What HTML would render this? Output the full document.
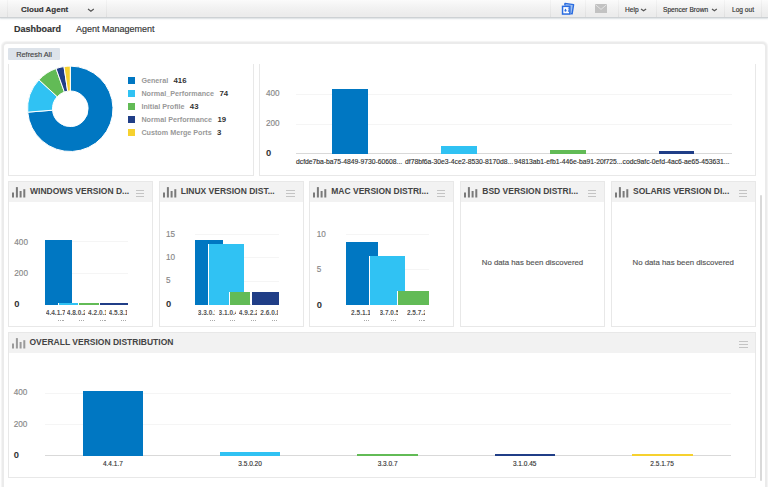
<!DOCTYPE html><html><head><meta charset="utf-8"><style>
*{box-sizing:border-box;margin:0;padding:0}
html,body{width:768px;height:487px;overflow:hidden;background:#fff;font-family:"Liberation Sans",sans-serif;position:relative}
.abs{position:absolute}
#topbar{left:0;top:0;width:768px;height:18px;background:linear-gradient(#fbfbfb 0,#f3f3f3 40%,#ececec 85%);border-bottom:1px solid #cdd1d4;box-shadow:0 0.6px 1.2px rgba(190,198,204,.55)}
.sep{position:absolute;top:0;width:1px;height:17px;background:linear-gradient(#f4f4f4,#dedede)}
.tb{position:absolute;font-size:6.6px;color:#333;top:7px;white-space:nowrap;line-height:1}
.chev{position:absolute;width:4px;height:4px;border-right:1.2px solid #555;border-bottom:1.2px solid #555;transform:rotate(45deg)}
.t{position:absolute;top:24.5px;font-size:9px;color:#333;white-space:nowrap;line-height:1}
#panel{left:2px;top:42.3px;width:765px;height:460px;border:2px solid #ebebeb;border-radius:5px;background:#fff;box-shadow:0 0 1px 0.5px #f3f3f3}
#refresh{left:8px;top:48px;width:52px;height:12px;background:#dde3ea;border-radius:1px;font-size:7.4px;color:#444;text-align:center;line-height:13.5px}
.w{position:absolute;border:1px solid #e8e8e8;background:#fff}
.wh{position:absolute;left:0;top:0;right:0;height:20px;background:#f2f2f2}
.wt{position:absolute;left:21px;top:5px;font-size:8.5px;font-weight:bold;color:#444;white-space:nowrap;line-height:1}
.ham{position:absolute;top:8.3px;width:8.5px;height:6.5px;border-top:1.2px solid #c4c4c4;border-bottom:1.2px solid #c4c4c4}
.ham:after{content:"";position:absolute;left:0;right:0;top:1.45px;height:1.2px;background:#c4c4c4}
.lbl{position:absolute;font-size:8.2px;color:#888;white-space:nowrap;line-height:1}
.z{position:absolute;font-size:9.4px;font-weight:bold;color:#333;line-height:1}
.grid{position:absolute;height:1.4px;background:#f5f5f5}
.axis{position:absolute;height:1px;background:#d9d9d9;z-index:0}
.bar{position:absolute;z-index:1}
.bb{border-left:1px solid #fff}
.c1{background:#0077c2}.c2{background:#30c2f3}.c3{background:#62bb56}.c4{background:#203e87}.c5{background:#f6d12f}
.xl{position:absolute;font-size:6.75px;color:#333;white-space:nowrap;line-height:1}
.xs{position:absolute;font-size:6.5px;color:#555;white-space:nowrap;line-height:1;overflow:hidden;font-weight:bold}
.dots{position:absolute;height:1px;width:5.4px;background:linear-gradient(90deg,#aaa 0,#aaa 1px,transparent 1px,transparent 2.2px,#aaa 2.2px,#aaa 3.2px,transparent 3.2px,transparent 4.4px,#aaa 4.4px,#aaa 5.4px)}
.nd{position:absolute;font-size:7.8px;color:#555;white-space:nowrap;line-height:1}
.leg{position:absolute;left:127.8px;width:7.3px;height:7px}
.legt{position:absolute;left:141.4px;font-size:7.2px;font-weight:bold;color:#999;white-space:nowrap;line-height:1}
.legt b{color:#333;font-size:7.8px;margin-left:5.3px}
#refresh,.tb,.t,.lbl,.nd,.xl{-webkit-text-stroke:0.15px currentColor}
</style></head><body>
<div id="topbar" class="abs">
<div class="sep" style="left:7px"></div>
<div class="sep" style="left:106px"></div>
<div class="sep" style="left:550px"></div>
<div class="sep" style="left:585px"></div>
<div class="sep" style="left:618px"></div>
<div class="sep" style="left:656px"></div>
<div class="sep" style="left:724px"></div>
<div class="sep" style="left:761px"></div>
<div class="tb" style="left:21px;font-size:8px;font-weight:bold;top:6.2px">Cloud Agent</div>
<svg class="abs" style="left:86.6px;top:7.6px;overflow:visible" width="7.8" height="4.2"><polyline points="1,1 3.9,3.2 6.8,1" fill="none" stroke="#555" stroke-width="1.2"/></svg>
<svg class="abs" style="left:558px;top:1px" width="20" height="16" viewBox="0 0 20 16">
<path d="M6.8 4.4 L7 2.4 L15.6 3.6 L14.1 12.8 L12.6 12.6" fill="#9fc0f0" stroke="#2a6ce0" stroke-width="1.4" stroke-linejoin="round"/>
<rect x="4.55" y="5.35" width="7.3" height="7.7" fill="#fff" stroke="#2a6ce0" stroke-width="1.5"/>
<path d="M7.5 7.4 Q6.1 9.2 6.4 10.1 Q7.5 11.4 8.6 10.1 Q8.9 9.2 7.5 7.4Z" fill="#2a6ce0"/>
<rect x="9.9" y="8.4" width="1" height="2.6" fill="#5b8fe6"/><circle cx="10.4" cy="7.1" r="0.65" fill="#2a6ce0"/></svg>
<svg class="abs" style="left:595px;top:4px" width="12" height="9" viewBox="0 0 12 9">
<rect x="0" y="0" width="12" height="9" fill="#c2c2c2"/><path d="M0.3 0.6 L6 5.4 L11.7 0.6" fill="none" stroke="#e6e6e6" stroke-width="0.9"/></svg>
<div class="tb" style="left:625px">Help</div>
<svg class="abs" style="left:640.3px;top:7.6px;overflow:visible" width="7.1" height="3.8"><polyline points="1,1 3.55,2.8 6.1,1" fill="none" stroke="#555" stroke-width="1.2"/></svg>
<div class="tb" style="left:663px">Spencer Brown</div>
<svg class="abs" style="left:710.6px;top:7.7px;overflow:visible" width="6.8" height="3.8"><polyline points="1,1 3.4,2.8 5.8,1" fill="none" stroke="#555" stroke-width="1.2"/></svg>
<div class="tb" style="left:732px">Log out</div>
</div>
<div class="t" style="left:14px;font-weight:bold">Dashboard</div>
<div class="t" style="left:76px">Agent Management</div>
<div id="panel" class="abs"></div>
<div id="refresh" class="abs">Refresh All</div>
<div class="w" style="left:8px;top:64px;width:245.5px;height:112px;border-top:none"></div>
<svg class="abs" style="left:0;top:0" width="160" height="180">
<path d="M70.30 66.10A42.7 42.7 0 1 1 27.73 112.15L52.55 110.20A17.8 17.8 0 1 0 70.30 91.00Z" fill="#0077c2" stroke="#fff" stroke-width="1"/>
<path d="M27.73 112.15A42.7 42.7 0 0 1 38.92 79.84L57.22 96.73A17.8 17.8 0 0 0 52.55 110.20Z" fill="#30c2f3" stroke="#fff" stroke-width="1"/>
<path d="M38.92 79.84A42.7 42.7 0 0 1 56.05 68.55L64.36 92.02A17.8 17.8 0 0 0 57.22 96.73Z" fill="#62bb56" stroke="#fff" stroke-width="1"/>
<path d="M56.05 68.55A42.7 42.7 0 0 1 63.99 66.57L67.67 91.20A17.8 17.8 0 0 0 64.36 92.02Z" fill="#203e87" stroke="#fff" stroke-width="1"/>
<path d="M63.99 66.57A42.7 42.7 0 0 1 70.30 66.10L70.30 91.00A17.8 17.8 0 0 0 67.67 91.20Z" fill="#f6d12f" stroke="#fff" stroke-width="1"/>
</svg>
<div class="leg c1" style="top:77.00px"></div><div class="legt" style="top:76.90px">General<b>416</b></div>
<div class="leg c2" style="top:90.10px"></div><div class="legt" style="top:90.00px">Normal_Performance<b>74</b></div>
<div class="leg c3" style="top:103.20px"></div><div class="legt" style="top:103.10px">Initial Profile<b>43</b></div>
<div class="leg c4" style="top:116.30px"></div><div class="legt" style="top:116.20px">Normal Performance<b>19</b></div>
<div class="leg c5" style="top:129.40px"></div><div class="legt" style="top:129.30px">Custom Merge Ports<b>3</b></div>
<div class="w" style="left:259px;top:64px;width:497px;height:112px;border-top:none"></div>
<div class="lbl" style="left:266px;top:89.70px">400</div>
<div class="lbl" style="left:266px;top:119.70px">200</div>
<div class="z" style="left:266px;top:148.20px">0</div>
<div class="grid" style="left:296px;top:93.70px;width:435.50px"></div>
<div class="grid" style="left:296px;top:123.50px;width:435.50px"></div>
<div class="bar c1" style="left:332.40px;top:89.20px;width:35.70px;height:64.70px"></div>
<div class="bar c2" style="left:441.00px;top:146.00px;width:35.60px;height:7.90px"></div>
<div class="bar c3" style="left:549.80px;top:149.80px;width:36.20px;height:4.10px"></div>
<div class="bar c4" style="left:658.80px;top:150.50px;width:35.60px;height:3.40px"></div>
<div class="axis" style="left:296px;top:153.40px;width:435.50px"></div>
<div class="xl" style="left:296px;top:158.6px">dcfde7ba-ba75-4849-9730-60608...</div>
<div class="xl" style="left:405px;top:158.6px">df78bf6a-30e3-4ce2-8530-8170d8...</div>
<div class="xl" style="left:514px;top:158.6px">94813ab1-efb1-446e-ba91-20f725...</div>
<div class="xl" style="left:622.5px;top:158.6px">codc9afc-0efd-4ac6-ae65-453631...</div>
<div class="w" style="left:8px;top:181px;width:145px;height:145.5px"><div class="wh"></div><svg class="abs" style="left:3px;top:5.3px" width="15" height="12" viewBox="0 0 15 12"><rect x="0" y="5.5" width="2" height="5" fill="#7a7a7a"/><rect x="3.9" y="0.1" width="2" height="10.4" fill="#7a7a7a"/><rect x="7.6" y="4" width="2" height="6.5" fill="#7a7a7a"/><rect x="11.3" y="2.2" width="2" height="8.3" fill="#7a7a7a"/></svg><div class="wt">WINDOWS VERSION D...</div><div class="ham" style="left:126.5px"></div></div>
<div class="w" style="left:158.75px;top:181px;width:145px;height:145.5px"><div class="wh"></div><svg class="abs" style="left:3px;top:5.3px" width="15" height="12" viewBox="0 0 15 12"><rect x="0" y="5.5" width="2" height="5" fill="#7a7a7a"/><rect x="3.9" y="0.1" width="2" height="10.4" fill="#7a7a7a"/><rect x="7.6" y="4" width="2" height="6.5" fill="#7a7a7a"/><rect x="11.3" y="2.2" width="2" height="8.3" fill="#7a7a7a"/></svg><div class="wt">LINUX VERSION DIST...</div><div class="ham" style="left:126.5px"></div></div>
<div class="w" style="left:309.25px;top:181px;width:145px;height:145.5px"><div class="wh"></div><svg class="abs" style="left:3px;top:5.3px" width="15" height="12" viewBox="0 0 15 12"><rect x="0" y="5.5" width="2" height="5" fill="#7a7a7a"/><rect x="3.9" y="0.1" width="2" height="10.4" fill="#7a7a7a"/><rect x="7.6" y="4" width="2" height="6.5" fill="#7a7a7a"/><rect x="11.3" y="2.2" width="2" height="8.3" fill="#7a7a7a"/></svg><div class="wt">MAC VERSION DISTRI...</div><div class="ham" style="left:126.5px"></div></div>
<div class="w" style="left:460.25px;top:181px;width:145px;height:145.5px"><div class="wh"></div><svg class="abs" style="left:3px;top:5.3px" width="15" height="12" viewBox="0 0 15 12"><rect x="0" y="5.5" width="2" height="5" fill="#7a7a7a"/><rect x="3.9" y="0.1" width="2" height="10.4" fill="#7a7a7a"/><rect x="7.6" y="4" width="2" height="6.5" fill="#7a7a7a"/><rect x="11.3" y="2.2" width="2" height="8.3" fill="#7a7a7a"/></svg><div class="wt">BSD VERSION DISTRI...</div><div class="ham" style="left:126.5px"></div></div>
<div class="w" style="left:611px;top:181px;width:145px;height:145.5px"><div class="wh"></div><svg class="abs" style="left:3px;top:5.3px" width="15" height="12" viewBox="0 0 15 12"><rect x="0" y="5.5" width="2" height="5" fill="#7a7a7a"/><rect x="3.9" y="0.1" width="2" height="10.4" fill="#7a7a7a"/><rect x="7.6" y="4" width="2" height="6.5" fill="#7a7a7a"/><rect x="11.3" y="2.2" width="2" height="8.3" fill="#7a7a7a"/></svg><div class="wt">SOLARIS VERSION DI...</div><div class="ham" style="left:126.5px"></div></div>
<div class="lbl" style="left:14.3px;top:238.60px">400</div>
<div class="lbl" style="left:14.3px;top:270.20px">200</div>
<div class="z" style="left:14.3px;top:299.40px">0</div>
<div class="grid" style="left:45px;top:240.50px;width:82.60px"></div>
<div class="grid" style="left:45px;top:272.50px;width:82.60px"></div>
<div class="bar c1" style="left:44.80px;top:239.90px;width:27.50px;height:64.70px"></div>
<div class="bar c2 bb" style="left:57.70px;top:303.00px;width:20.30px;height:1.60px"></div>
<div class="bar c3 bb" style="left:78.00px;top:303.00px;width:21.40px;height:1.60px"></div>
<div class="bar c4 bb" style="left:99.40px;top:303.00px;width:28.20px;height:1.60px"></div>
<div class="axis" style="left:45px;top:304.10px;width:82.60px"></div>
<div class="xs" style="left:45.80px;top:310.30px;width:19.00px">4.4.1.7</div>
<div class="dots" style="left:58.20px;top:319.90px"></div>
<div class="xs" style="left:66.80px;top:310.30px;width:18.50px">4.8.0.2</div>
<div class="dots" style="left:78.50px;top:319.90px"></div>
<div class="xs" style="left:88.10px;top:310.30px;width:17.50px">4.2.0.1</div>
<div class="dots" style="left:100.20px;top:319.90px"></div>
<div class="xs" style="left:108.60px;top:310.30px;width:18.50px">4.5.3.1</div>
<div class="dots" style="left:120.80px;top:319.90px"></div>
<div class="lbl" style="left:166px;top:230.70px">15</div>
<div class="lbl" style="left:166px;top:254.00px">10</div>
<div class="lbl" style="left:166px;top:277.40px">5</div>
<div class="z" style="left:166px;top:299.20px">0</div>
<div class="grid" style="left:195px;top:233.50px;width:83.60px"></div>
<div class="grid" style="left:195px;top:257.00px;width:83.60px"></div>
<div class="grid" style="left:195px;top:280.50px;width:83.60px"></div>
<div class="bar c1" style="left:195.40px;top:239.60px;width:27.40px;height:65.30px"></div>
<div class="bar c2 bb" style="left:208.20px;top:244.10px;width:36.00px;height:60.80px"></div>
<div class="bar c3 bb" style="left:228.80px;top:291.50px;width:21.70px;height:13.40px"></div>
<div class="bar c4 bb" style="left:250.50px;top:291.50px;width:28.10px;height:13.40px"></div>
<div class="axis" style="left:195px;top:304.40px;width:83.60px"></div>
<div class="xs" style="left:197.80px;top:310.30px;width:17.50px">3.3.0.1</div>
<div class="dots" style="left:209.70px;top:319.90px"></div>
<div class="xs" style="left:218.60px;top:310.30px;width:17.50px">3.1.0.4</div>
<div class="dots" style="left:230.10px;top:319.90px"></div>
<div class="xs" style="left:238.80px;top:310.30px;width:18.00px">4.9.2.2</div>
<div class="dots" style="left:251.00px;top:319.90px"></div>
<div class="xs" style="left:260.30px;top:310.30px;width:18.00px">2.6.0.8</div>
<div class="dots" style="left:271.80px;top:319.90px"></div>
<div class="lbl" style="left:316.8px;top:230.70px">10</div>
<div class="lbl" style="left:316.8px;top:266.30px">5</div>
<div class="z" style="left:316.8px;top:299.80px">0</div>
<div class="grid" style="left:345.5px;top:233.50px;width:83.70px"></div>
<div class="grid" style="left:345.5px;top:269.00px;width:83.70px"></div>
<div class="bar c1" style="left:345.80px;top:241.90px;width:31.80px;height:62.90px"></div>
<div class="bar c2 bb" style="left:369.30px;top:255.60px;width:36.00px;height:49.20px"></div>
<div class="bar c3 bb" style="left:397.40px;top:291.20px;width:31.80px;height:13.60px"></div>
<div class="axis" style="left:345.5px;top:304.30px;width:83.70px"></div>
<div class="xs" style="left:351.10px;top:310.30px;width:18.50px">2.5.1.1</div>
<div class="dots" style="left:363.80px;top:319.90px"></div>
<div class="xs" style="left:379.50px;top:310.30px;width:18.50px">3.7.0.5</div>
<div class="dots" style="left:391.10px;top:319.90px"></div>
<div class="xs" style="left:406.90px;top:310.30px;width:18.50px">2.5.7.2</div>
<div class="dots" style="left:419.20px;top:319.90px"></div>
<div class="nd" style="left:481.75px;top:258.8px">No data has been discovered</div>
<div class="nd" style="left:632.50px;top:258.8px">No data has been discovered</div>
<div class="w" style="left:7.5px;top:332px;width:748.5px;height:146px"><div class="wh" style="height:19.5px"></div><svg class="abs" style="left:3px;top:4.8px" width="15" height="12" viewBox="0 0 15 12"><rect x="0" y="5.5" width="2" height="5" fill="#9a9a9a"/><rect x="3.9" y="0.1" width="2" height="10.4" fill="#9a9a9a"/><rect x="7.6" y="4" width="2" height="6.5" fill="#9a9a9a"/><rect x="11.3" y="2.2" width="2" height="8.3" fill="#9a9a9a"/></svg><div class="wt" style="top:5.4px">OVERALL VERSION DISTRIBUTION</div><div class="ham" style="left:730.5px;top:8.3px"></div></div>
<div class="lbl" style="left:13.7px;top:389.40px">400</div>
<div class="lbl" style="left:13.7px;top:420.60px">200</div>
<div class="z" style="left:13.7px;top:449.90px">0</div>
<div class="grid" style="left:44.6px;top:392.60px;width:686.80px"></div>
<div class="grid" style="left:44.6px;top:424.10px;width:686.80px"></div>
<div class="bar c1" style="left:83.00px;top:390.80px;width:59.60px;height:64.80px"></div>
<div class="bar c2" style="left:220.40px;top:452.30px;width:59.30px;height:3.30px"></div>
<div class="bar c3" style="left:357.20px;top:453.50px;width:60.80px;height:2.10px"></div>
<div class="bar c4" style="left:494.70px;top:453.50px;width:59.90px;height:2.10px"></div>
<div class="bar c5" style="left:631.70px;top:453.90px;width:60.90px;height:1.70px"></div>
<div class="axis" style="left:44.6px;top:455.10px;width:686.80px"></div>
<div class="xl" style="font-size:6.5px;left:72.90px;width:80px;text-align:center;top:460.80px">4.4.1.7</div>
<div class="xl" style="font-size:6.5px;left:210.10px;width:80px;text-align:center;top:460.80px">3.5.0.20</div>
<div class="xl" style="font-size:6.5px;left:347.60px;width:80px;text-align:center;top:460.80px">3.3.0.7</div>
<div class="xl" style="font-size:6.5px;left:484.70px;width:80px;text-align:center;top:460.80px">3.1.0.45</div>
<div class="xl" style="font-size:6.5px;left:622.10px;width:80px;text-align:center;top:460.80px">2.5.1.75</div>
<div class="abs" style="left:759.8px;top:195px;width:2.4px;height:286px;background:#d9d9d9;border-radius:2px"></div>
</body></html>
